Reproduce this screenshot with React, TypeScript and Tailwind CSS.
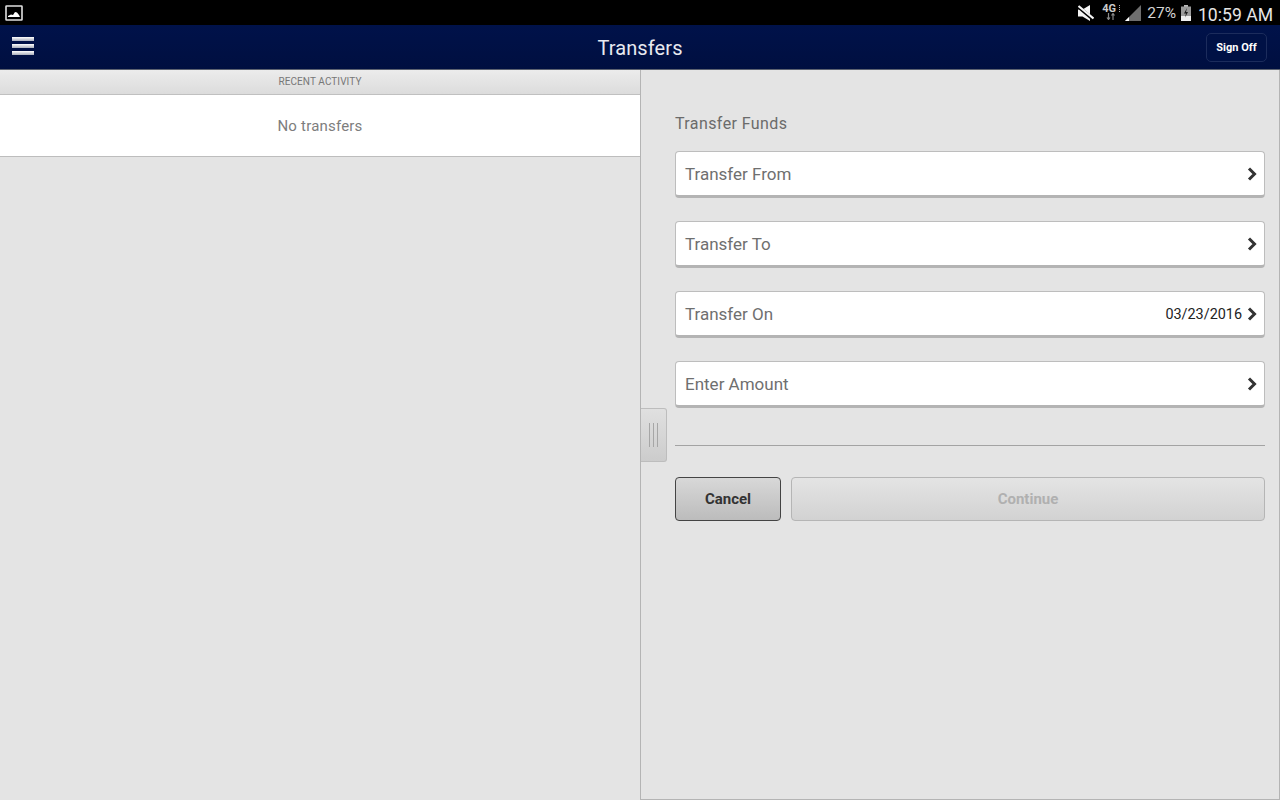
const font = "font-['Roboto','Noto_Sans',sans-serif]";

type FieldRowProps = {
  label: string;
  value?: string;
};

function Chevron() {
  return (
    <svg className="w-[10px] h-[14px] ml-[5px]" viewBox="0 0 10 14" fill="none">
      <path d="M2 1.5 L7.5 7 L2 12.5" stroke="#333333" strokeWidth={3} />
    </svg>
  );
}

function FieldRow({ label, value }: FieldRowProps) {
  return (
    <div className="h-[47px] flex items-center bg-white border border-[#bdbdbd] border-b-[3px] border-b-[#b4b4b4] rounded-[4px] pl-[9px] pr-[7px]">
      <span className="text-[17px] pt-[2px] text-[#6f6f6f] flex-1">{label}</span>
      {value && <span className="text-[14.4px] pt-[2px] text-[#222222]">{value}</span>}
      <Chevron />
    </div>
  );
}

function StatusBar() {
  return (
    <div className="h-[25px] bg-black flex items-center justify-between pl-[5px] pr-[7px] text-[#d8d8d8]">
      <svg className="w-[18px] h-[16px]" viewBox="0 0 18 16" fill="none">
        <rect x="1" y="1" width="16" height="14" stroke="#e0e0e0" strokeWidth={1.6} rx={0.5} />
        <path d="M3 12 L3 11 L6 9.5 L8 10 L10 7 L12 7.5 L14 10 L15 12 Z" fill="#ffffff" />
      </svg>
      <div className="flex items-center">
        <svg className="w-[16px] h-[16px]" viewBox="0 0 16 16" fill="none">
          <path d="M0 4.5 H4.5 L12 0 V16 L4.5 11.5 H0 Z" fill="#f4f4f4" />
          <path d="M0 1.5 L16 15" stroke="#000000" strokeWidth={3.5} />
          <path d="M0.5 1 L15.5 13.5" stroke="#f4f4f4" strokeWidth={2.2} />
        </svg>
        <div className="relative w-[18px] h-[18px] ml-[8px]">
          <span className="absolute left-0 top-[-1px] text-[11px] leading-[12px] font-bold text-[#cccccc]">4G</span>
          <div className="absolute right-0 top-[1px] w-px h-[7px] border-r border-dotted border-[#aaaaaa]" />
          <svg className="absolute left-[4px] top-[9px] w-[10px] h-[7px]" viewBox="0 0 10 7" fill="none">
            <path d="M2.5 0 V6 M1 4.5 L2.5 6.5 L4 4.5 M7 7 V1 M5.5 2.5 L7 0.5 L8.5 2.5" stroke="#888888" strokeWidth={1.2} />
          </svg>
        </div>
        <svg className="w-[16px] h-[16px] ml-[5px]" viewBox="0 0 16 16">
          <path d="M0 16 L16 0 V16 Z" fill="#6e6e6e" />
          <path d="M0 16 L4 12 V16 Z" fill="#ffffff" />
        </svg>
        <span className="text-[15.5px] ml-[6px] pt-[3px] text-[#d4d4d4]">27%</span>
        <svg className="w-[10px] h-[16px] ml-[5px]" viewBox="0 0 10 16">
          <rect x="3" y="0" width="4" height="2" fill="#bbbbbb" />
          <rect x="0" y="1.5" width="10" height="14.5" fill="#9a9a9a" />
          <rect x="0" y="11" width="10" height="5" fill="#eeeeee" />
          <path d="M6 3 L3 8.5 H5 L4 12.5 L7 7 H5 Z" fill="#1a1a1a" />
        </svg>
        <span className="text-[17.6px] ml-[7px] pt-[5px] text-[#e6e6e6]">10:59 AM</span>
      </div>
    </div>
  );
}

function Header() {
  return (
    <div className="h-[45px] bg-gradient-to-b from-[#00124a] to-[#000f40] border-b border-b-[#5c6270] flex items-center justify-between pl-[12px] pr-[13px] relative">
      <div className="w-[22px] flex flex-col gap-[3px] mb-[2px]">
        <div className="h-[4px] bg-gradient-to-b from-white to-[#a9aebb]" />
        <div className="h-[4px] bg-gradient-to-b from-white to-[#a9aebb]" />
        <div className="h-[4px] bg-gradient-to-b from-white to-[#a9aebb]" />
      </div>
      <h1 className="absolute left-0 right-0 pt-[2px] text-center text-[20px] tracking-[0.1px] text-[#e8eaf0] pointer-events-none">Transfers</h1>
      <button className="w-[61px] h-[29px] rounded-[5px] border border-[#1c2c5c] bg-[#001145] pt-[2px] text-white text-[11px] font-bold">
        Sign Off
      </button>
    </div>
  );
}

function LeftPane() {
  return (
    <div className="w-[640px]">
      <div className="h-[25px] pb-[2px] bg-gradient-to-b from-[#ececec] to-[#dcdcdc] border-b border-[#c0c0c0] flex items-center justify-center text-[10px] tracking-[0.08px] text-[#777777]">
        RECENT ACTIVITY
      </div>
      <div className="h-[62px] pt-[2px] bg-white border-b border-[#bdbdbd] flex items-center justify-center text-[15px] text-[#7d7d7d] tracking-[0.2px]">
        No transfers
      </div>
    </div>
  );
}

function RightPane() {
  return (
    <div className="flex-1 border-l border-r border-b border-[#b4b4b4] pt-[43px] pl-[34px] pr-[14px] relative">
      <div className="absolute left-0 top-[338px] w-[26px] h-[54px] rounded-r-[3px] border border-l-0 border-[#bdbdbd] bg-gradient-to-b from-[#e0e0e0] to-[#cccccc] flex items-center justify-center gap-[3px]">
        <div className="w-px h-[24px] bg-[#a6a6a6]" />
        <div className="w-px h-[24px] bg-[#a6a6a6]" />
        <div className="w-px h-[24px] bg-[#a6a6a6]" />
      </div>
      <h2 className="text-[16px] leading-[22px] text-[#6b6b6b] tracking-[0.4px]">Transfer Funds</h2>
      <div className="mt-[16px] flex flex-col gap-[23px]">
        <FieldRow label="Transfer From" />
        <FieldRow label="Transfer To" />
        <FieldRow label="Transfer On" value="03/23/2016" />
        <FieldRow label="Enter Amount" />
      </div>
      <div className="mt-[37px] h-px bg-[#a3a3a3]" />
      <div className="mt-[31px] flex gap-[10px]">
        <button className="w-[106px] h-[44px] rounded-[4px] border border-[#444444] bg-gradient-to-b from-[#d8d8d8] to-[#bcbcbc] text-[15px] font-bold text-[#333333]">
          Cancel
        </button>
        <button className="flex-1 h-[44px] rounded-[4px] border border-[#b5b5b5] bg-gradient-to-b from-[#e4e4e4] to-[#d2d2d2] text-[15px] font-bold text-[#b0b0b0]">
          Continue
        </button>
      </div>
    </div>
  );
}

export default function App() {
  return (
    <div className={`${font} w-[1280px] h-[800px] flex flex-col bg-[#e4e4e4] overflow-hidden`}>
      <StatusBar />
      <Header />
      <div className="flex-1 flex">
        <LeftPane />
        <RightPane />
      </div>
    </div>
  );
}
